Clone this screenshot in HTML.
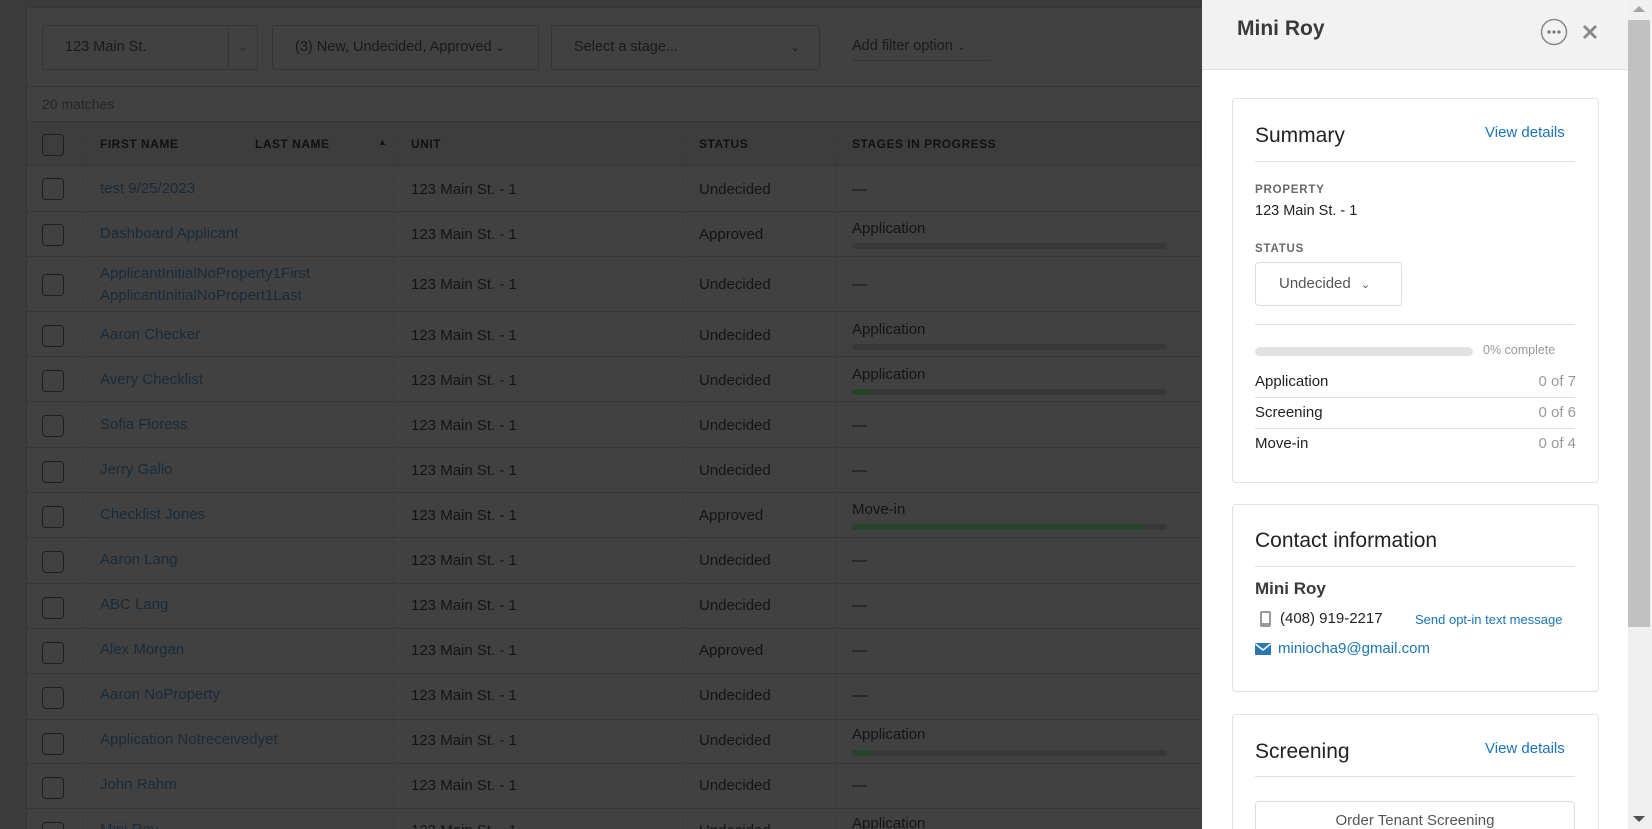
<!DOCTYPE html>
<html style="overflow:hidden;height:829px"><head><meta charset="utf-8"><style>
*{box-sizing:border-box;margin:0;padding:0}
body{width:1652px;height:829px;overflow:hidden;background:#3b3b3b;font-family:"Liberation Sans",Arial,sans-serif;position:relative}
.a{position:absolute;white-space:nowrap}
.card{position:absolute;left:26px;top:7px;width:1200px;height:822px;background:#414141;border:1px solid #363636;border-bottom:none}
.fbox{position:absolute;top:25px;height:45px;border:1px solid #363636;border-radius:3px;color:#1a1a1a;font-size:14.5px;line-height:43px;padding-left:22px}
.row{position:absolute;left:26px;width:1180px;border-bottom:1px solid #383838}
.cb{position:absolute;left:16px;width:22px;height:22px;border:1px solid #1e1e1e;border-radius:4px}
.t{position:absolute;font-size:15px;color:#141414}
.t.l{color:#1a2b3a}
.bar{position:absolute;left:826px;width:315px;height:6px;background:#383838;border-radius:3px;overflow:hidden}
.bar i{display:block;height:100%;background:#25442a}
.vd{position:absolute;top:121px;height:708px;border-left:1px dashed #393939}
.panel{position:absolute;left:1202px;top:0;width:426px;height:829px;background:#fff;overflow:hidden}
.pc{position:absolute;left:30px;width:367px;border:1px solid #e2e2e2;border-radius:4px;background:#fff}
.h{font-size:21px;color:#222}
.lk{color:#1a73b8}
.lab{font-size:11.5px;font-weight:bold;color:#6a6a6a;letter-spacing:.8px}
.hr{position:absolute;left:22px;width:320px;border-top:1px solid #e0e0e0}
.th{position:absolute;top:137px;font-size:12px;font-weight:bold;color:#111;letter-spacing:.5px}
</style></head><body>
<div class="card"></div>
<div class="fbox" style="left:42px;width:216px">123 Main St.<span style="position:absolute;left:185px;top:0;height:43px;border-left:1px solid #363636"></span><span style="position:absolute;left:195px;color:#2a2a2a;font-size:12px">&#8964;</span></div>
<div class="fbox" style="left:272px;width:267px">(3) New, Undecided, Approved <span style="font-size:11px">&#8964;</span></div>
<div class="fbox" style="left:551px;width:269px">Select a stage...<span style="position:absolute;left:238px;font-size:12px">&#8964;</span></div>
<div class="a" style="left:852px;top:38px;font-size:14.5px;color:#1a1a1a;border-bottom:1px solid #363636;padding-bottom:6px;width:138px">Add filter option <span style="font-size:11px">&#8964;</span></div>
<div class="a" style="left:27px;top:86px;width:1200px;border-top:1px solid #363636"></div>
<div class="a" style="left:42px;top:96px;font-size:14px;color:#262626">20 matches</div>
<div class="a" style="left:27px;top:121px;width:1200px;height:45px;background:#3d3d3d;border-top:1px solid #363636;border-bottom:1px solid #363636"></div>
<div class="cb" style="left:42px;top:134px"></div>
<div class="th" style="left:100px">FIRST NAME</div>
<div class="th" style="left:255px">LAST NAME</div>
<div class="a" style="left:378px;top:137px;font-size:9px;color:#111">&#9650;</div>
<div class="th" style="left:411px">UNIT</div>
<div class="th" style="left:699px">STATUS</div>
<div class="th" style="left:852px">STAGES IN PROGRESS</div>
<div class="vd" style="left:82px"></div><div class="vd" style="left:393px"></div><div class="vd" style="left:682px"></div><div class="vd" style="left:836px"></div>

<div class="row" style="top:166px;height:46px"><div class="cb" style="top:12px"></div><div class="t l" style="left:74px;top:14px">test 9/25/2023</div><div class="t" style="left:385px;top:15px">123 Main St. - 1</div><div class="t" style="left:673px;top:15px">Undecided</div><div class="t" style="left:826px;top:15px">—</div></div>
<div class="row" style="top:212px;height:45px"><div class="cb" style="top:12px"></div><div class="t l" style="left:74px;top:13px">Dashboard Applicant</div><div class="t" style="left:385px;top:14px">123 Main St. - 1</div><div class="t" style="left:673px;top:14px">Approved</div><div class="t" style="left:826px;top:8px">Application</div><div class="bar" style="top:31px"></div></div>
<div class="row" style="top:257px;height:55px"><div class="cb" style="top:17px"></div><div class="t l" style="left:74px;top:6px;line-height:22px">ApplicantInitialNoProperty1First<br>ApplicantInitialNoPropert1Last</div><div class="t" style="left:385px;top:19px">123 Main St. - 1</div><div class="t" style="left:673px;top:19px">Undecided</div><div class="t" style="left:826px;top:19px">—</div></div>
<div class="row" style="top:312px;height:45px"><div class="cb" style="top:13px"></div><div class="t l" style="left:74px;top:14px">Aaron Checker</div><div class="t" style="left:385px;top:15px">123 Main St. - 1</div><div class="t" style="left:673px;top:15px">Undecided</div><div class="t" style="left:826px;top:9px">Application</div><div class="bar" style="top:32px"></div></div>
<div class="row" style="top:357px;height:45px"><div class="cb" style="top:13px"></div><div class="t l" style="left:74px;top:14px">Avery Checklist</div><div class="t" style="left:385px;top:15px">123 Main St. - 1</div><div class="t" style="left:673px;top:15px">Undecided</div><div class="t" style="left:826px;top:9px">Application</div><div class="bar" style="top:32px"><i style="width:6%"></i></div></div>
<div class="row" style="top:402px;height:46px"><div class="cb" style="top:13px"></div><div class="t l" style="left:74px;top:14px">Sofia Floress</div><div class="t" style="left:385px;top:15px">123 Main St. - 1</div><div class="t" style="left:673px;top:15px">Undecided</div><div class="t" style="left:826px;top:15px">—</div></div>
<div class="row" style="top:448px;height:45px"><div class="cb" style="top:13px"></div><div class="t l" style="left:74px;top:13px">Jerry Gallo</div><div class="t" style="left:385px;top:14px">123 Main St. - 1</div><div class="t" style="left:673px;top:14px">Undecided</div><div class="t" style="left:826px;top:14px">—</div></div>
<div class="row" style="top:493px;height:45px"><div class="cb" style="top:13px"></div><div class="t l" style="left:74px;top:13px">Checklist Jones</div><div class="t" style="left:385px;top:14px">123 Main St. - 1</div><div class="t" style="left:673px;top:14px">Approved</div><div class="t" style="left:826px;top:8px">Move-in</div><div class="bar" style="top:31px"><i style="width:93%"></i></div></div>
<div class="row" style="top:538px;height:46px"><div class="cb" style="top:13px"></div><div class="t l" style="left:74px;top:13px">Aaron Lang</div><div class="t" style="left:385px;top:14px">123 Main St. - 1</div><div class="t" style="left:673px;top:14px">Undecided</div><div class="t" style="left:826px;top:14px">—</div></div>
<div class="row" style="top:584px;height:45px"><div class="cb" style="top:13px"></div><div class="t l" style="left:74px;top:12px">ABC Lang</div><div class="t" style="left:385px;top:13px">123 Main St. - 1</div><div class="t" style="left:673px;top:13px">Undecided</div><div class="t" style="left:826px;top:13px">—</div></div>
<div class="row" style="top:629px;height:45px"><div class="cb" style="top:13px"></div><div class="t l" style="left:74px;top:12px">Alex Morgan</div><div class="t" style="left:385px;top:13px">123 Main St. - 1</div><div class="t" style="left:673px;top:13px">Approved</div><div class="t" style="left:826px;top:13px">—</div></div>
<div class="row" style="top:674px;height:46px"><div class="cb" style="top:13px"></div><div class="t l" style="left:74px;top:12px">Aaron NoProperty</div><div class="t" style="left:385px;top:13px">123 Main St. - 1</div><div class="t" style="left:673px;top:13px">Undecided</div><div class="t" style="left:826px;top:13px">—</div></div>
<div class="row" style="top:720px;height:44px"><div class="cb" style="top:13px"></div><div class="t l" style="left:74px;top:11px">Application Notreceivedyet</div><div class="t" style="left:385px;top:12px">123 Main St. - 1</div><div class="t" style="left:673px;top:12px">Undecided</div><div class="t" style="left:826px;top:6px">Application</div><div class="bar" style="top:30px"><i style="width:6%"></i></div></div>
<div class="row" style="top:764px;height:45px"><div class="cb" style="top:13px"></div><div class="t l" style="left:74px;top:12px">John Rahm</div><div class="t" style="left:385px;top:13px">123 Main St. - 1</div><div class="t" style="left:673px;top:13px">Undecided</div><div class="t" style="left:826px;top:13px">—</div></div>
<div class="row" style="top:809px;height:20px;border:none;overflow:hidden"><div class="cb" style="top:13px"></div><div class="t l" style="left:74px;top:12px">Mini Roy</div><div class="t" style="left:385px;top:13px">123 Main St. - 1</div><div class="t" style="left:673px;top:13px">Undecided</div><div class="t" style="left:826px;top:6px">Application</div></div>

<div class="panel">
 <div class="a" style="left:0;top:0;width:426px;height:70px;background:#f2f2f2;border-bottom:1px solid #dedede"></div>
 <div class="a" style="left:35px;top:17px;font-size:21px;font-weight:bold;color:#3a3a3a">Mini Roy</div>
 <svg class="a" style="left:338px;top:18px" width="28" height="28" viewBox="0 0 28 28"><circle cx="14" cy="14" r="12.5" fill="none" stroke="#8a8a8a" stroke-width="1.5"/><circle cx="9" cy="14" r="1.6" fill="#777"/><circle cx="14" cy="14" r="1.6" fill="#777"/><circle cx="19" cy="14" r="1.6" fill="#777"/></svg>
 <svg class="a" style="left:380px;top:24px" width="16" height="16" viewBox="0 0 16 16"><path d="M2 2L14 14M14 2L2 14" stroke="#8a8a8a" stroke-width="3"/></svg>

 <div class="pc" style="top:98px;height:385px">
  <div class="a h" style="left:22px;top:25px">Summary</div>
  <div class="a lk" style="left:252px;top:25px;font-size:15px">View details</div>
  <div class="hr" style="top:62px"></div>
  <div class="a lab" style="left:22px;top:85px">PROPERTY</div>
  <div class="a" style="left:22px;top:104px;font-size:14.5px;color:#222">123 Main St. - 1</div>
  <div class="a lab" style="left:22px;top:144px">STATUS</div>
  <div class="a" style="left:22px;top:163px;width:147px;height:44px;border:1px solid #ddd;border-radius:4px;font-size:15px;color:#555;line-height:42px;padding-left:23px">Undecided <span style="font-size:11px;margin-left:6px">&#8964;</span></div>
  <div class="hr" style="top:225px"></div>
  <div class="a" style="left:22px;top:248px;width:218px;height:9px;background:#e1e1e1;border-radius:5px"></div>
  <div class="a" style="left:250px;top:244px;font-size:12.5px;color:#999">0% complete</div>
  <div class="a" style="left:22px;top:274px;font-size:15px;color:#222">Application</div><div class="a" style="right:22px;top:274px;font-size:15px;color:#999">0 of 7</div>
  <div class="hr" style="top:298px"></div>
  <div class="a" style="left:22px;top:305px;font-size:15px;color:#222">Screening</div><div class="a" style="right:22px;top:305px;font-size:15px;color:#999">0 of 6</div>
  <div class="hr" style="top:329px"></div>
  <div class="a" style="left:22px;top:336px;font-size:15px;color:#222">Move-in</div><div class="a" style="right:22px;top:336px;font-size:15px;color:#999">0 of 4</div>
 </div>

 <div class="pc" style="top:504px;height:188px">
  <div class="a h" style="left:22px;top:24px">Contact information</div>
  <div class="hr" style="top:61px"></div>
  <div class="a" style="left:22px;top:74px;font-size:17px;font-weight:bold;color:#3a3a3a">Mini Roy</div>
  <div class="a" style="left:27px;top:106px;width:11px;height:16px;border:2px solid #999;border-radius:2px;border-bottom-width:4px"></div>
  <div class="a" style="left:47px;top:105px;font-size:15px;color:#222">(408) 919-2217</div>
  <div class="a lk" style="left:182px;top:107px;font-size:13px">Send opt-in text message</div>
  <svg class="a" style="left:22px;top:138px" width="16" height="12" viewBox="0 0 16 12"><rect width="16" height="12" rx="1" fill="#2a77b5"/><path d="M0.5 1L8 7L15.5 1" stroke="#fff" stroke-width="1.5" fill="none"/></svg>
  <div class="a lk" style="left:45px;top:135px;font-size:15px">miniocha9@gmail.com</div>
 </div>

 <div class="pc" style="top:714px;height:140px">
  <div class="a h" style="left:22px;top:25px">Screening</div>
  <div class="a lk" style="left:252px;top:25px;font-size:15px">View details</div>
  <div class="hr" style="top:61px"></div>
  <div class="a" style="left:22px;top:86px;width:320px;height:44px;border:1px solid #ddd;border-radius:4px;font-size:15px;color:#555;text-align:center;line-height:38px">Order Tenant Screening</div>
 </div>
</div>
<div class="a" style="left:1628px;top:0;width:24px;height:829px;background:#f0f0f0"></div>
<div class="a" style="left:1628px;top:20px;width:22px;height:607px;background:#c1c1c1"></div>
<div class="a" style="left:1633px;top:6px;width:0;height:0;border-left:6px solid transparent;border-right:6px solid transparent;border-bottom:6px solid #a3a3a3"></div>
<div class="a" style="left:1633px;top:816px;width:0;height:0;border-left:6px solid transparent;border-right:6px solid transparent;border-top:6px solid #505050"></div>
</body></html>
